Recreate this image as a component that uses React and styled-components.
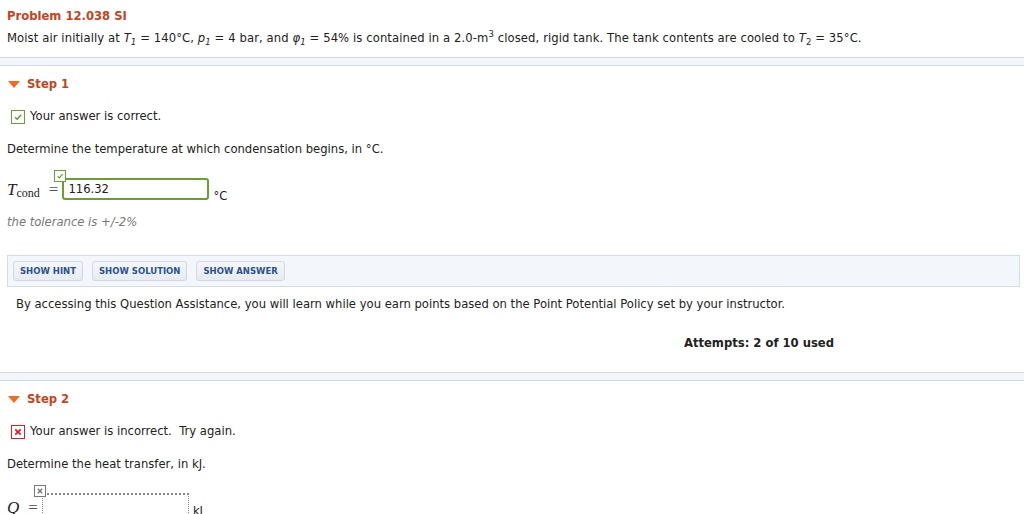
import React from "react";
import styled, { createGlobalStyle } from "styled-components";

const GlobalStyle = createGlobalStyle`
  body {
    margin: 0;
    background: #fff;
    font-family: "DejaVu Sans", Verdana, sans-serif;
    font-size: 11.6px;
    color: #222;
  }
`;

function CheckIcon({ size = 14 }) {
  return (
    <IconBox size={size} color="#6a9f38">
      <svg width={size - 4} height={size - 4} viewBox="0 0 10 10">
        <path d="M2 5.2 L4.2 7.3 L8.2 2.8" fill="none" stroke="#5f9a2c" strokeWidth="1.4" />
      </svg>
    </IconBox>
  );
}

function CrossIcon({ size = 14, color = "#e01b24" }) {
  return (
    <IconBox size={size} color={color}>
      <svg width={size - 4} height={size - 4} viewBox="0 0 10 10">
        <path d="M2.3 2.3 L7.7 7.7 M7.7 2.3 L2.3 7.7" fill="none" stroke={color} strokeWidth="1.8" />
      </svg>
    </IconBox>
  );
}

function Step({ title, correct, question, label, value, unit, tolerance, children }) {
  return (
    <>
      <StepHeading>
        <Triangle />
        {title}
      </StepHeading>
      <Feedback>
        {correct ? <CheckIcon /> : <CrossIcon />}
        {correct ? "Your answer is correct." : "Your answer is incorrect.\u00a0\u00a0Try again."}
      </Feedback>
      <Question>{question}</Question>
      <AnswerRow>
        <MathLabel>
          {label}
          <Eq>=</Eq>
        </MathLabel>
        <InputWrap>
          <Marker>{correct ? <CheckIcon size={12} /> : <CrossIcon size={12} color="#777" />}</Marker>
          <Input $correct={correct} value={value} readOnly />
        </InputWrap>
        <Unit>{unit}</Unit>
      </AnswerRow>
      {tolerance && <Tolerance>{tolerance}</Tolerance>}
      {children}
    </>
  );
}

export default function App() {
  return (
    <Page>
      <GlobalStyle />
      <Header>
        <ProblemTitle>Problem 12.038 SI</ProblemTitle>
        <ProblemText>
          Moist air initially at <i>T</i><sub><i>1</i></sub> = 140°C, <i>p</i><sub><i>1</i></sub> = 4 bar, and{" "}
          <i>φ</i><sub><i>1</i></sub> = 54% is contained in a 2.0-m<sup>3</sup> closed, rigid tank. The tank
          contents are cooled to <i>T</i><sub>2</sub> = 35°C.
        </ProblemText>
      </Header>
      <Separator />
      <Step
        title="Step 1"
        correct
        question="Determine the temperature at which condensation begins, in °C."
        label={
          <>
            <i>T</i>
            <Sub>cond</Sub>
          </>
        }
        value="116.32"
        unit="°C"
        tolerance="the tolerance is +/-2%"
      >
        <AssistPanel>
          <AssistButton>SHOW HINT</AssistButton>
          <AssistButton>SHOW SOLUTION</AssistButton>
          <AssistButton>SHOW ANSWER</AssistButton>
        </AssistPanel>
        <AssistNote>
          By accessing this Question Assistance, you will learn while you earn points based on the Point Potential
          Policy set by your instructor.
        </AssistNote>
        <Attempts>Attempts: 2 of 10 used</Attempts>
      </Step>
      <Separator $top={21} />
      <Step
        title="Step 2"
        correct={false}
        question="Determine the heat transfer, in kJ."
        label={<i>Q</i>}
        value=""
        unit="kJ"
      />
    </Page>
  );
}

const Page = styled.div`
  width: 1024px;
  height: 514px;
  overflow: hidden;
  line-height: 15px;
`;

const Header = styled.div`
  padding: 9px 7px 0;
`;

const ProblemTitle = styled.div`
  font-weight: bold;
  color: #c9421a;
`;

const ProblemText = styled.div`
  margin-top: 7px;
  white-space: nowrap;
  letter-spacing: 0.1px;

  sub, sup {
    font-size: 8.5px;
    line-height: 0;
  }
`;

const Separator = styled.div`
  margin-top: ${(p) => p.$top ?? 11}px;
  height: 7px;
  background: #f2f6fa;
  border-top: 1px solid #cfd9e6;
  border-bottom: 1px solid #cfd9e6;
`;

const StepHeading = styled.div`
  margin: 11px 0 0 8px;
  display: flex;
  align-items: center;
  gap: 7px;
  font-weight: bold;
  color: #c9421a;
`;

const Triangle = styled.span`
  width: 0;
  height: 0;
  border-left: 6px solid transparent;
  border-right: 6px solid transparent;
  border-top: 7px solid #f26b21;
`;

const Feedback = styled.div`
  margin: 17px 0 0 11px;
  display: flex;
  align-items: center;
  gap: 5px;
`;

const IconBox = styled.span`
  box-sizing: border-box;
  width: ${(p) => p.size}px;
  height: ${(p) => p.size}px;
  border: 1px solid ${(p) => p.color};
  background: #fff;
  display: inline-flex;
  align-items: center;
  justify-content: center;
`;

const Question = styled.div`
  margin: 18px 0 0 7px;
`;

const AnswerRow = styled.div`
  margin: 13px 0 0 7px;
  display: flex;
  align-items: flex-end;
`;

const MathLabel = styled.span`
  font-family: "Liberation Serif", "DejaVu Serif", serif;
  font-size: 17px;
  line-height: 18px;
  color: #222;
  margin-bottom: -2px;
`;

const Sub = styled.span`
  font-size: 12px;
  vertical-align: -2px;
`;

const Eq = styled.span`
  margin: 0 4px 0 9px;
  color: #555;
`;

const InputWrap = styled.span`
  position: relative;
  padding-top: 8px;
  display: inline-block;
`;

const Marker = styled.span`
  position: absolute;
  left: -8px;
  top: 0;
  display: flex;
  z-index: 1;
`;

const Input = styled.input`
  box-sizing: border-box;
  display: block;
  width: 147px;
  height: 22px;
  margin: 0;
  padding: 0 4px;
  font-family: "DejaVu Sans", Verdana, sans-serif;
  font-size: 11.6px;
  color: #222;
  outline: none;
  background: #fff;
  border: ${(p) => (p.$correct ? "2px solid #6a9f38" : "1px dotted #888")};
  border-top-width: 2px;
  border-radius: ${(p) => (p.$correct ? "3px" : "0")};
`;

const Unit = styled.span`
  margin: 0 0 -4px 4px;
  line-height: 15px;
`;

const Tolerance = styled.div`
  margin: 15px 0 0 7px;
  font-style: italic;
  color: #777;
`;

const AssistPanel = styled.div`
  margin: 25px 4px 0 7px;
  padding: 5px;
  display: flex;
  gap: 9px;
  background: #f3f7fb;
  border: 1px solid #d3dde9;
`;

const AssistButton = styled.button`
  height: 20px;
  padding: 0 6px;
  font-family: "DejaVu Sans", Verdana, sans-serif;
  font-size: 8.5px;
  font-weight: bold;
  color: #2b5189;
  background: linear-gradient(#f4f7fa, #e6ecf3);
  border: 1px solid #d0d9e3;
  border-radius: 3px;
`;

const AssistNote = styled.div`
  margin: 10px 0 0 16px;
`;

const Attempts = styled.div`
  margin-top: 24px;
  padding-right: 190px;
  text-align: right;
  font-weight: bold;
`;
